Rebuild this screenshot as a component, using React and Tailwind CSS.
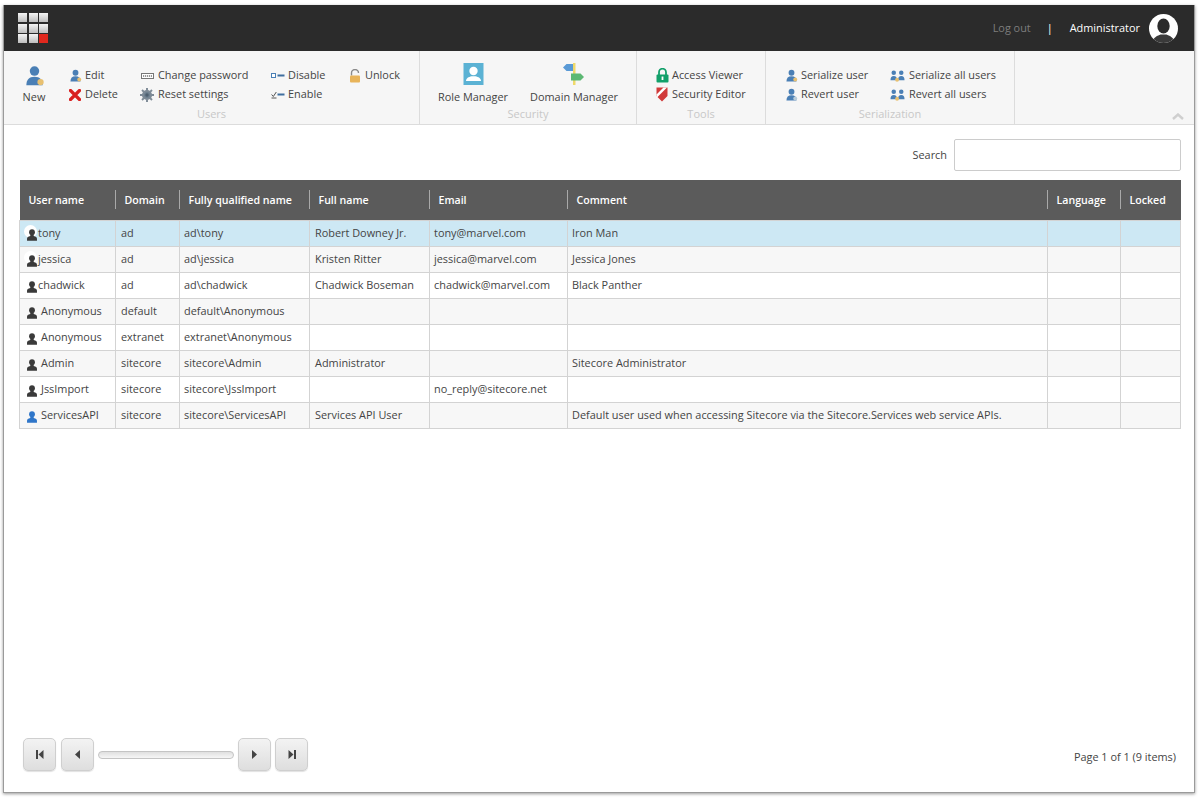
import React from "react";

const Person = ({ c = "#4a7fb5", size = 14, badge }) => (
  <svg width={size} height={size} viewBox="0 0 16 16" className="shrink-0">
    <circle cx="8" cy="4.6" r="3.6" fill={c} />
    <path d="M1.8 15.5c0-4.4 2-6.6 6.2-6.6s6.2 2.2 6.2 6.6z" fill={c} />
    {badge && <circle cx="12.6" cy="13" r="2.4" fill={badge} />}
  </svg>
);
const People = ({ badge }) => (
  <svg width="15" height="12" viewBox="0 0 18 14" className="shrink-0">
    <circle cx="4.5" cy="3.2" r="2.7" fill="#4a7fb5" />
    <path d="M.6 12c0-3.6 1.3-5 3.9-5s3.9 1.4 3.9 5z" fill="#4a7fb5" />
    <circle cx="13.5" cy="3.2" r="2.7" fill="#4a7fb5" />
    <path d="M9.6 12c0-3.6 1.3-5 3.9-5s3.9 1.4 3.9 5z" fill="#4a7fb5" />
    <circle cx="8.5" cy="11.5" r="2.3" fill={badge} />
  </svg>
);
const RowUser = ({ blue, halo }) => (
  <span className="relative inline-flex w-[13px] h-[14px] mt-[3px] shrink-0 items-center justify-center">
    {halo && <span className="absolute left-[-1px] top-[-3px] w-[13px] h-[13px] rounded-full bg-white" />}
    <svg width="12" height="14" viewBox="0 0 14 15" className="relative">
      <circle cx="7" cy="4.3" r="3.4" fill={blue ? "#2f76c9" : "#3a3a3a"} />
      <path d="M5 7h4v1.8c2.500.5 3.800 1.700 3.800 3.200v2.200H1.200V12c0-1.500 1.300-2.700 3.800-3.200z" fill={blue ? "#2f76c9" : "#3a3a3a"} />
    </svg>
  </span>
);

const Tool = ({ icon, label, iw = "w-[14px]", gap = "ml-[4px]" }) => (
  <div className="flex items-center h-[19px]">
    <span className={`flex justify-center shrink-0 ${iw}`}>{icon}</span>
    <span className={`whitespace-nowrap ${gap}`}>{label}</span>
  </div>
);

const Gear = () => (
  <svg width="14" height="14" viewBox="0 0 16 16">
    <circle cx="8" cy="8" r="4.6" fill="#6d7f8f" stroke="#7d8a96" strokeWidth="2.4" />
    <circle cx="8" cy="8" r="2" fill="#4f6070" />
    <path d="M8 0v3M8 13v3M0 8h3M13 8h3M2.3 2.3l2.100 2.100M11.600 11.600l2.100 2.100M2.300 13.700l2.100-2.100M11.600 4.400l2.100-2.100" stroke="#7d8a96" strokeWidth="2.200" />
  </svg>
);
const Cross = () => (
  <svg width="12" height="12" viewBox="0 0 12 12">
    <path d="M1.500 1.500l9 9M10.500 1.500l-9 9" stroke="#d91f1f" strokeWidth="3.200" strokeLinecap="round" />
  </svg>
);
const Keyboard = () => (
  <svg width="13" height="6" viewBox="0 0 13 6">
    <rect x=".5" y=".5" width="12" height="5" fill="#fff" stroke="#777" />
    <path d="M2 3h9" stroke="#777" strokeWidth="1.400" strokeDasharray="1.200 .8" />
  </svg>
);
const Toggle = ({ check }) => (
  <svg width="14" height="8" viewBox="0 0 14 8">
    {check ? (
      <path d="M.6 3.500l1.700 2 3-4.500M.5 7h5" fill="none" stroke="#555" strokeWidth="1" />
    ) : (
      <rect x=".5" y="1.500" width="4" height="4" fill="#fff" stroke="#4a7fb5" />
    )}
    <rect x="6.500" y="2.500" width="7" height="2" fill="#3f6f9f" />
  </svg>
);
const Lock = () => (
  <svg width="12" height="14" viewBox="0 0 12 14">
    <path d="M2.500 6.500V4a3.500 3.500 0 0 1 7 0" fill="none" stroke="#8a8a8a" strokeWidth="1.400" />
    <rect x="1" y="6.500" width="10" height="7" rx="1" fill="#e8b45a" />
  </svg>
);
const GreenLock = () => (
  <svg width="13" height="15" viewBox="0 0 13 15">
    <path d="M3 7V4.200a3.500 3.500 0 0 1 7 0V7" fill="none" stroke="#12a06a" strokeWidth="1.800" />
    <rect x=".5" y="6.500" width="12" height="8" rx="1" fill="#12a06a" />
    <rect x="5.600" y="8.500" width="1.800" height="3.500" fill="#fff" />
  </svg>
);
const Shield = () => (
  <svg width="12" height="15" viewBox="0 0 12 15">
    <path d="M.5.500h11v8.500L6 14.500.500 9z" fill="#d13a3a" />
    <path d="M.5 7.500L7.500.5h3.500L.5 11z" fill="#fff" />
  </svg>
);
const RoleIcon = () => (
  <svg width="21" height="22" viewBox="0 0 20 22">
    <rect width="20" height="22" fill="#5bb2d4" />
    <circle cx="10" cy="8" r="4.200" fill="#fff" />
    <path d="M2.500 18c0-3 2.600-4 5.500-4.800h4c2.900.8 5.500 1.800 5.500 4.800z" fill="#fff" />
  </svg>
);
const SignIcon = () => (
  <svg width="22" height="22" viewBox="0 0 22 22">
    <rect x="10" y="0" width="2.500" height="22" fill="#efd96a" />
    <path d="M0 4.500L3.500 1H10v7H3.500z" fill="#5a9ad6" />
    <path d="M8 10.500h9.500l3.500 3.500-3.500 3.500H8z" fill="#5cb873" />
  </svg>
);

const Group = ({ children, label, className }) => (
  <div className={`relative h-full border-r border-[#dcdcdc] shrink-0 ${className}`}>
    {children}
    <div className="absolute left-0 right-0 bottom-[3px] text-center text-[11px] leading-[14px] text-[#c8c8c8]">{label}</div>
  </div>
);

const rows = [
  ["tony", "ad", "ad\\tony", "Robert Downey Jr.", "tony@marvel.com", "Iron Man", "halo", "tight"],
  ["jessica", "ad", "ad\\jessica", "Kristen Ritter", "jessica@marvel.com", "Jessica Jones", "halo", "tight"],
  ["chadwick", "ad", "ad\\chadwick", "Chadwick Boseman", "chadwick@marvel.com", "Black Panther", "", "tight"],
  ["Anonymous", "default", "default\\Anonymous", "", "", "", "", ""],
  ["Anonymous", "extranet", "extranet\\Anonymous", "", "", "", "", ""],
  ["Admin", "sitecore", "sitecore\\Admin", "Administrator", "", "Sitecore Administrator", "", ""],
  ["JssImport", "sitecore", "sitecore\\JssImport", "", "no_reply@sitecore.net", "", "", ""],
  ["ServicesAPI", "sitecore", "sitecore\\ServicesAPI", "Services API User", "", "Default user used when accessing Sitecore via the Sitecore.Services web service APIs.", "blue", ""],
];

const cols = [96, 64, 130, 120, 138, 480, 73, 60];
const heads = ["User name", "Domain", "Fully qualified name", "Full name", "Email", "Comment", "Language", "Locked"];

const PagerBtn = ({ children }) => (
  <button className="w-[33px] h-[33px] rounded-[5px] border border-[#cfcfcf] bg-gradient-to-b from-[#f3f3f3] to-[#dedede] flex items-center justify-center shadow-[0_1px_1px_rgba(0,0,0,0.12)]">
    {children}
  </button>
);

export default function App() {
  return (
    <div className="w-[1200px] h-[800px] bg-white pt-[5px] pl-[3px] overflow-hidden text-[10.9px] text-[#444]" style={{ fontFamily: '"Open Sans", sans-serif' }}>
      <div className="h-[788px] w-[1192px] flex flex-col bg-white border-x border-b border-[#9a9a9a] shadow-[0_1px_3px_rgba(0,0,0,0.4)]">
        <header className="h-[46px] bg-[#2b2b2b] flex items-center justify-between shrink-0 pl-[14px] pr-[16px]">
          <div className="grid grid-cols-[9px_9px_9px] grid-rows-[9px_9px_9px] gap-[1.5px]">
            {[0, 1, 2, 3, 4, 5, 6, 7].map((i) => (
              <span key={i} className="bg-gradient-to-b from-[#f4f4f4] to-[#bdbdbd]" />
            ))}
            <span className="bg-[#e0281e]" />
          </div>
          <div className="flex items-center">
            <span className="text-[#7d7d7d]">Log out</span>
            <span className="text-white ml-[16px]">|</span>
            <span className="text-white ml-[17px]">Administrator</span>
            <span className="ml-[9px] w-[29px] h-[29px] rounded-full bg-white overflow-hidden flex items-end justify-center">
              <svg width="29" height="29" viewBox="0 0 29 29">
                <ellipse cx="14.500" cy="12" rx="6.200" ry="7.500" fill="#2b2b2b" />
                <path d="M3 29c1-6 6-7.500 8.500-8.500h6c2.500 1 7.500 2.500 8.500 8.500z" fill="#3a3a3a" />
              </svg>
            </span>
          </div>
        </header>

        <div className="h-[74px] bg-[#f6f6f6] border-b border-[#dcdcdc] flex shrink-0 relative text-[#444]">
          <Group label="Users" className="w-[416px]">
            <div className="flex pt-[15px] pl-[1px]">
              <div className="w-[58px] mr-[6px] flex flex-col items-center -mt-[1px]">
                <Person size={21} badge="#e8c070" />
                <span className="mt-[3px] leading-[15px]">New</span>
              </div>
              <div className="w-[71px]">
                <Tool iw="w-[12px]" icon={<Person size={13} badge="#e8c070" />} label="Edit" />
                <Tool iw="w-[12px]" icon={<Cross />} label="Delete" />
              </div>
              <div className="w-[131px]">
                <Tool icon={<Keyboard />} label="Change password" />
                <Tool icon={<Gear />} label="Reset settings" />
              </div>
              <div className="w-[78px]">
                <Tool gap="ml-[3px]" icon={<Toggle />} label="Disable" />
                <Tool gap="ml-[3px]" icon={<Toggle check />} label="Enable" />
              </div>
              <Tool iw="w-[12px]" icon={<Lock />} label="Unlock" />
            </div>
          </Group>
          <Group label="Security" className="w-[217px]">
            <div className="flex pt-[12px] pl-[18px]">
              <div className="flex flex-col items-center w-[70px]">
                <RoleIcon />
                <span className="mt-[4px] whitespace-nowrap">Role Manager</span>
              </div>
              <div className="flex flex-col items-center w-[88px] ml-[22px]">
                <SignIcon />
                <span className="mt-[4px] whitespace-nowrap">Domain Manager</span>
              </div>
            </div>
          </Group>
          <Group label="Tools" className="w-[129px]">
            <div className="pt-[15px] pl-[18px]">
              <Tool gap="ml-[3px]" icon={<GreenLock />} label="Access Viewer" />
              <Tool gap="ml-[3px]" icon={<Shield />} label="Security Editor" />
            </div>
          </Group>
          <Group label="Serialization" className="w-[249px]">
            <div className="flex pt-[15px] pl-[19px]">
              <div className="w-[105px]">
                <Tool iw="w-[12px]" icon={<Person size={13} badge="#e8c070" />} label="Serialize user" />
                <Tool iw="w-[12px]" icon={<Person size={13} badge="#b8cbd8" />} label="Revert user" />
              </div>
              <div>
                <Tool gap="ml-[4px]" iw="w-[15px]" icon={<People badge="#e8c070" />} label="Serialize all users" />
                <Tool gap="ml-[4px]" iw="w-[15px]" icon={<People badge="#e8c070" />} label="Revert all users" />
              </div>
            </div>
          </Group>
          <svg width="12" height="7" viewBox="0 0 12 7" className="absolute right-[10px] bottom-[4px]">
            <path d="M1 6l5-4.500L11 6" fill="none" stroke="#cfcfcf" strokeWidth="2.400" />
          </svg>
        </div>

        <div className="flex-1 flex flex-col min-h-0 pl-[15px] pr-[13px]">
          <div className="h-[55px] flex items-center justify-end shrink-0 pt-[5px]">
            <label className="mr-[7px]">Search</label>
            <input className="w-[227px] h-[32px] border border-[#cccccc] rounded-[2px] bg-white" />
          </div>

          <table className="table-fixed border-collapse w-[1161px] shrink-0">
            <colgroup>
              {cols.map((c, i) => (
                <col key={i} style={{ width: c }} />
              ))}
            </colgroup>
            <thead>
              <tr className="h-[40px] bg-[#5b5b5b] text-white">
                {heads.map((h, i) => (
                  <th key={h} className="p-0 text-left font-semibold text-[10.6px]">
                    <div className={`h-[19px] leading-[21px] pl-[9px] ${i < 7 ? "border-r border-[#a9a9a9]" : ""}`}>{h}</div>
                  </th>
                ))}
              </tr>
            </thead>
            <tbody>
              {rows.map((r, idx) => (
                <tr key={idx} className={`h-[26px] ${idx === 0 ? "bg-[#cde8f4]" : idx % 2 === 1 ? "bg-[#f7f7f7]" : "bg-white"}`}>
                  <td className="border border-[#d3d3d3] p-0 pl-[5px]">
                    <div className="flex items-center whitespace-nowrap">
                      <RowUser blue={r[6] === "blue"} halo={r[6] === "halo"} />
                      <span className={r[7] === "tight" ? "ml-0" : "ml-[3px]"}>{r[0]}</span>
                    </div>
                  </td>
                  {[1, 2, 3, 4, 5].map((k) => (
                    <td key={k} className={`border border-[#d3d3d3] p-0 whitespace-nowrap ${k === 1 || k === 3 ? "pl-[5px]" : "pl-[4px]"}`}>
                      {r[k]}
                    </td>
                  ))}
                  <td className="border border-[#d3d3d3] p-0" />
                  <td className="border border-[#d3d3d3] p-0" />
                </tr>
              ))}
            </tbody>
          </table>

          <div className="flex-1" />

          <div className="h-[33px] mb-[21px] flex items-center justify-between shrink-0 pl-[4px] pr-[5px]">
            <div className="flex items-center">
              <PagerBtn>
                <svg width="8" height="9" viewBox="0 0 8 9"><rect x="0" y="0" width="2" height="9" fill="#444" /><path d="M7.500 0v9L2.500 4.500z" fill="#444" /></svg>
              </PagerBtn>
              <span className="ml-[5px]" />
              <PagerBtn>
                <svg width="5" height="9" viewBox="0 0 5 9"><path d="M5 0v9L0 4.500z" fill="#444" /></svg>
              </PagerBtn>
              <div className="mx-[4px] w-[136px] h-[8px] rounded-full border border-[#c4c4c4] bg-gradient-to-b from-[#e0e0e0] to-[#f6f6f6]" />
              <PagerBtn>
                <svg width="5" height="9" viewBox="0 0 5 9"><path d="M0 0v9l5-4.500z" fill="#444" /></svg>
              </PagerBtn>
              <span className="ml-[4px]" />
              <PagerBtn>
                <svg width="8" height="9" viewBox="0 0 8 9"><path d="M.5 0v9l5-4.500z" fill="#444" /><rect x="6" y="0" width="2" height="9" fill="#444" /></svg>
              </PagerBtn>
            </div>
            <span className="mt-[5px]">Page 1 of 1 (9 items)</span>
          </div>
        </div>
      </div>
    </div>
  );
}
